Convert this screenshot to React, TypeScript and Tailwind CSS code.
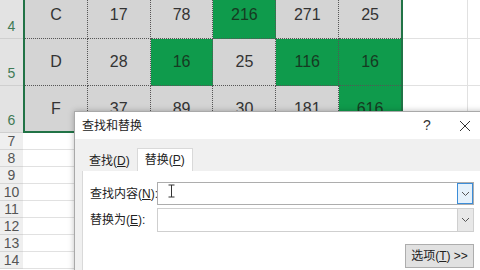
const font = { fontFamily: '"Liberation Sans", "Noto Sans CJK SC", sans-serif' };

const bigRows = [
  { n: 4, cells: ["C", "17", "78", "216", "271", "25"], green: [3] },
  { n: 5, cells: ["D", "28", "16", "25", "116", "16"], green: [2, 4, 5] },
  { n: 6, cells: ["F", "37", "89", "30", "181", "616"], green: [5] },
];
const smallRows = [7, 8, 9, 10, 11, 12, 13, 14];

function Chevron() {
  return (
    <svg width="9" height="6" viewBox="0 0 9 6">
      <path d="M1 1 L4.5 4.5 L8 1" fill="none" stroke="#555" strokeWidth="1" />
    </svg>
  );
}

export default function App() {
  return (
    <div className="relative w-[480px] h-[270px] overflow-hidden bg-white" style={font}>
      <div className="flex flex-col -mt-[8px]">
        {bigRows.map((r, ri) => (
          <div key={r.n} className="flex h-[47px]">
            <div className="w-[23px] shrink-0 bg-[#e3e3e3] border-b border-[#cfcfcf] flex items-end justify-center pb-[1px] text-[14px] text-[#3f7a55]">
              {r.n}
            </div>
            <div
              className={`flex w-[380px] border-x-2 border-[#217346] ${
                ri === 2 ? "border-b-2" : ""
              }`}
            >
              {r.cells.map((c, ci) => (
                <div
                  key={ci}
                  className={`flex-1 flex items-center justify-center text-[16px] ${
                    ci < 5 ? "border-r border-dotted border-r-[#555]" : ""
                  } ${ri < 2 ? "border-b border-dotted border-b-[#555]" : ""} ${
                    r.green.includes(ci) ? "bg-[#0f9b4c] text-[#163a22]" : "bg-[#d4d4d4] text-[#333]"
                  }`}
                >
                  {c}
                </div>
              ))}
            </div>
            <div className="w-[65px] shrink-0 border-b border-r border-[#e1e1e1]" />
            <div className="flex-1 border-b border-[#e1e1e1]" />
          </div>
        ))}
        {smallRows.map((n) => (
          <div key={n} className="flex h-[17px]">
            <div className="w-[23px] shrink-0 bg-[#efefef] border-b border-[#d6d6d6] flex items-center justify-center text-[14px] leading-none text-[#555]">
              {n}
            </div>
            <div className="flex-1 border-b border-[#e1e1e1]" />
          </div>
        ))}
      </div>

      {/* find & replace dialog */}
      <div className="absolute left-[74px] top-[111px] w-[412px] h-[170px] bg-[#f0f0f0] border border-[#a9a9a9] shadow-[0_0_6px_rgba(0,0,0,0.25)] flex flex-col text-[12px] text-[#222]">
        <div className="h-[27px] bg-white flex items-center pl-[7px] pr-[12px] shrink-0">
          <span>查找和替换</span>
          <span className="ml-auto text-[14px] text-[#333] w-[8px]">?</span>
          <span className="ml-[28px] w-[14px] flex items-center">
            <svg width="12" height="12" viewBox="0 0 12 12">
              <path d="M1 1 L11 11 M11 1 L1 11" stroke="#333" strokeWidth="1" />
            </svg>
          </span>
        </div>
        <div className="flex items-end h-[32px] pl-[7px] shrink-0">
          <div className="px-[7px] h-[21px] flex items-center">
            查找(<span className="underline">D</span>)
          </div>
          <div className="px-[7px] h-[23px] bg-white border-x border-t border-[#d9d9d9] flex items-center">
            替换(<span className="underline">P</span>)
          </div>
        </div>
        <div className="flex-1 ml-[7px] bg-white border-l border-[#d9d9d9] pl-[7px] pt-[11px] flex flex-col">
          <div className="flex items-center h-[23px]">
            <span className="w-[67px] whitespace-nowrap">
              查找内容(<span className="underline">N</span>):
            </span>
            <div className="relative w-[317px] h-[23px] border border-[#adadad] flex justify-end">
              <svg className="absolute left-[10px] top-[1px]" width="7" height="14" viewBox="0 0 7 14">
                <path d="M0.5 1 H6.5 M3.5 1 V13 M0.5 13 H6.5" stroke="#333" strokeWidth="1" fill="none" />
              </svg>
              <div className="w-[16px] h-full bg-[#e5f1fb] border border-[#3c8dd8] flex items-center justify-center">
                <Chevron />
              </div>
            </div>
          </div>
          <div className="flex items-center h-[24px] mt-[3px]">
            <span className="w-[67px] whitespace-nowrap">
              替换为(<span className="underline">E</span>):
            </span>
            <div className="w-[317px] h-[24px] border border-[#cfcfcf] flex justify-end">
              <div className="w-[16px] h-full bg-[#e8e8e8] border-l border-[#cfcfcf] flex items-center justify-center">
                <Chevron />
              </div>
            </div>
          </div>
          <div className="flex mt-[12px] pl-[315px]">
            <div className="w-[69px] h-[24px] bg-[#e1e1e1] border border-[#adadad] flex items-center justify-center">
              选项(<span className="underline">T</span>) &gt;&gt;
            </div>
          </div>
        </div>
      </div>
    </div>
  );
}
